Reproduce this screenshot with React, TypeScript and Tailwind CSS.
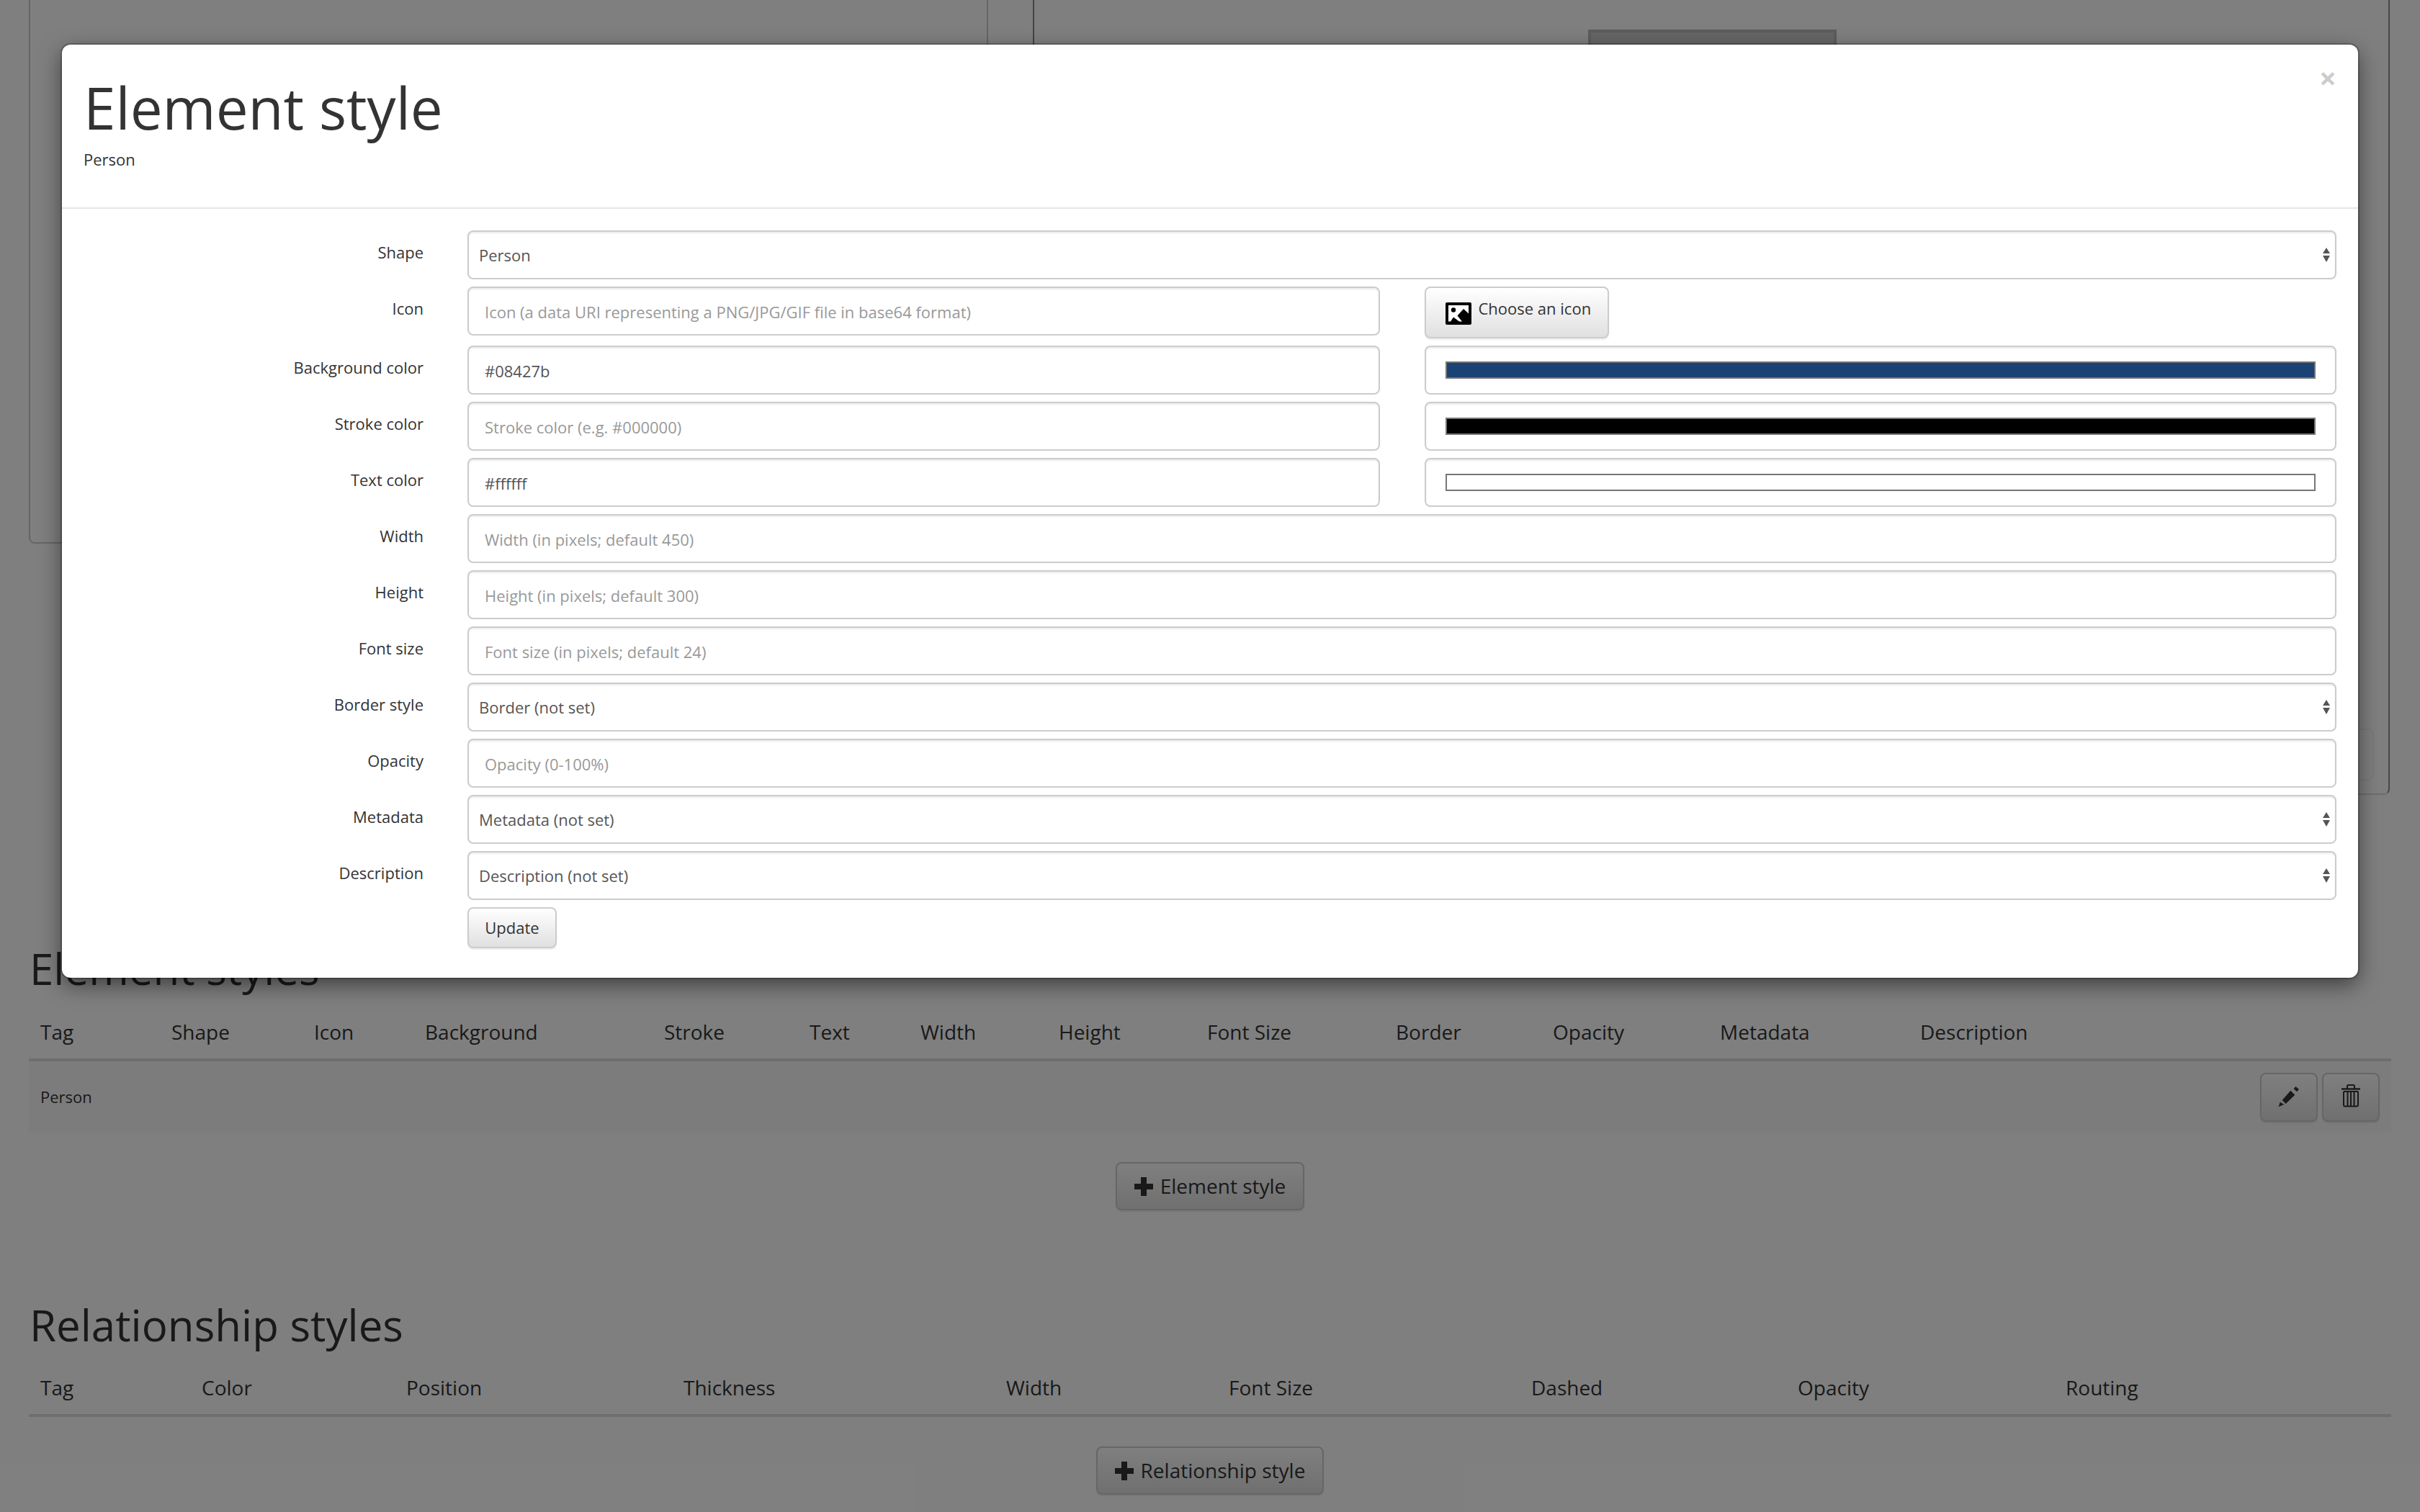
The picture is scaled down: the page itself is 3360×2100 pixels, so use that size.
import React from "react";

const BTN =
  "bg-gradient-to-b from-white to-[#e0e0e0] border-2 border-[#cccccc] rounded-lg shadow-[0_2px_2px_rgba(0,0,0,0.08)] text-[#333333]";
const FIELD =
  "w-full h-[68px] bg-white border-2 border-[#cccccc] rounded-lg shadow-[inset_0_2px_2px_rgba(0,0,0,0.075)] text-[22px] text-[#555555] outline-none";

function Plus() {
  return (
    <svg width="26" height="26" viewBox="0 0 26 26" className="shrink-0">
      <path d="M9 0H17V9H26V17H17V26H9V17H0V9H9Z" fill="#333333" />
    </svg>
  );
}

function Pencil() {
  return (
    <svg width="30" height="30" viewBox="0 0 30 30" className="-mt-[2px]">
      <path d="M0.7 29.3L2.7 22.7L8.3 26Z" fill="#333333" />
      <path d="M5.7 20L10.7 25L23.3 12.7L17.3 6.7Z" fill="#333333" />
      <path d="M21.7 4.3L24.3 1L29 5L26 8.3Z" fill="#333333" />
    </svg>
  );
}

function Trash() {
  return (
    <svg width="28" height="32" viewBox="0 0 28 32" fill="none" stroke="#333333" strokeWidth="2" className="-mt-[4px]">
      <path d="M1 6.5H27" strokeWidth="2.4" />
      <path d="M9 6V2.5C9 1.7 9.7 1 10.5 1H17.5C18.3 1 19 1.7 19 2.5V6" />
      <path d="M4 10V28.5C4 29.6 4.9 30.5 6 30.5H22C23.1 30.5 24 29.6 24 28.5V10" />
      <path d="M4 10H24M9.5 10V30M14 10V30M18.5 10V30" />
    </svg>
  );
}

function Picture() {
  return (
    <svg width="36" height="31" viewBox="0 0 36 31" className="shrink-0">
      <rect width="36" height="31" rx="2" fill="#000000" />
      <path d="M4 4H32V15.5L25 9L16.5 18.5L23 26.5H19L11 20.5L7 26.5H4Z" fill="#ffffff" />
      <circle cx="11" cy="10.5" r="3.2" fill="#000000" />
    </svg>
  );
}

function Arrows() {
  return (
    <svg
      width="10"
      height="20"
      viewBox="0 0 10 20"
      className="absolute right-[9px] top-1/2 -translate-y-1/2 pointer-events-none"
    >
      <path d="M5 0L10 8H0Z" fill="#555555" />
      <path d="M0 11H10L5 20Z" fill="#555555" />
    </svg>
  );
}

function Label({ text }: { text: string }) {
  return (
    <label className="w-[502px] shrink-0 h-[68px] pb-[8px] flex items-center justify-end text-[22px] text-[#333333]">
      {text}
    </label>
  );
}

function Row({ label, children }: { label: string; children: React.ReactNode }) {
  return (
    <div className="flex gap-[61px] mb-[10px]">
      <Label text={label} />
      <div className="flex-1 min-w-0">{children}</div>
    </div>
  );
}

function SelectRow({ label, value }: { label: string; value: string }) {
  return (
    <Row label={label}>
      <div className="relative">
        <select defaultValue={value} className={`${FIELD} appearance-none pl-[14px] pr-[30px]`}>
          <option>{value}</option>
        </select>
        <Arrows />
      </div>
    </Row>
  );
}

function TextRow({ label, placeholder }: { label: string; placeholder: string }) {
  return (
    <Row label={label}>
      <input className={`${FIELD} px-[22px] pt-[2px] placeholder:text-[#999999]`} placeholder={placeholder} />
    </Row>
  );
}

function ColorRow({
  label,
  value,
  placeholder,
  bar,
}: {
  label: string;
  value?: string;
  placeholder?: string;
  bar: string;
}) {
  return (
    <Row label={label}>
      <div className="grid grid-cols-2 gap-[62px]">
        <input
          className={`${FIELD} px-[22px] pt-[2px] placeholder:text-[#999999]`}
          defaultValue={value}
          placeholder={placeholder}
        />
        <div className={`${FIELD} px-[27px] flex items-center`}>
          <div className={`w-full h-[24px] border-2 border-[#767676] ${bar}`} />
        </div>
      </div>
    </Row>
  );
}

function TableHead({ cols, grid }: { cols: string[]; grid: string }) {
  return (
    <div className={`grid ${grid} h-[76px] border-b-4 border-[#dddddd] text-[28px] text-[#333333]`}>
      {cols.map((c) => (
        <div key={c} className="px-4 flex items-center pb-[2px]">
          {c}
        </div>
      ))}
    </div>
  );
}

function AddButton({ label, className }: { label: string; className: string }) {
  return (
    <div className={`flex justify-center ${className}`}>
      <button className={`${BTN} h-[67px] px-[24px] flex items-center gap-[10px] text-[28px]`}>
        <Plus />
        <span className="pb-[2px]">{label}</span>
      </button>
    </div>
  );
}

export default function App() {
  return (
    <div className="relative w-[3360px] h-[2100px] overflow-hidden bg-white font-['Open_Sans',sans-serif] text-[#333333]">
      <div className="px-[40px]">
        <div className="flex items-start h-[1104px]">
          <div className="w-[1332px] h-[755px] border-2 border-t-0 border-[#cccccc] rounded-b-lg" />
          <div className="relative ml-[62px] w-[1884px] h-[1104px] border-x-2 border-b-2 border-l-[#888888] border-r-[#909090] border-b-[#dddddd] rounded-b-lg">
            <div className="absolute left-[769px] top-[41px] w-[345px] h-[100px] bg-[#cccccc] border-4 border-[#bbbbbb]" />
            <div className="absolute right-[20px] top-[1012px] w-[40px] h-[72px] border-2 border-[#f2f2f2] rounded-lg" />
          </div>
        </div>

        <h2 className="mt-[208px] h-[66px] leading-[66px] pl-[1px] text-[60px] font-normal text-[#333333]">
          Element styles
        </h2>
        <div className="mt-[20px]">
          <TableHead
            grid="grid-cols-[182px_198px_154px_332px_202px_154px_192px_206px_262px_218px_232px_278px_1fr]"
            cols={[
              "Tag",
              "Shape",
              "Icon",
              "Background",
              "Stroke",
              "Text",
              "Width",
              "Height",
              "Font Size",
              "Border",
              "Opacity",
              "Metadata",
              "Description",
            ]}
          />
          <div className="h-[99px] bg-[#f9f9f9] flex items-center justify-between pl-4 pr-4 text-[22px]">
            <span>Person</span>
            <div className="flex gap-[6px]">
              <button className={`${BTN} w-[80px] h-[68px] flex items-center justify-center`}>
                <Pencil />
              </button>
              <button className={`${BTN} w-[80px] h-[68px] flex items-center justify-center`}>
                <Trash />
              </button>
            </div>
          </div>
        </div>
        <AddButton label="Element style" className="mt-[41px]" />

        <h2 className="mt-[126px] h-[66px] leading-[66px] pl-[1px] text-[60px] font-normal text-[#333333]">
          Relationship styles
        </h2>
        <div className="mt-[19px]">
          <TableHead
            grid="grid-cols-[224px_284px_385px_448px_309px_420px_370px_372px_1fr]"
            cols={[
              "Tag",
              "Color",
              "Position",
              "Thickness",
              "Width",
              "Font Size",
              "Dashed",
              "Opacity",
              "Routing",
            ]}
          />
        </div>
        <AddButton label="Relationship style" className="mt-[41px]" />
      </div>

      <div className="absolute inset-0 bg-black/50" />

      <div className="absolute left-[86px] top-[62px] w-[3188px] h-[1296px] bg-white rounded-xl shadow-[0_0_0_2px_rgba(0,0,0,0.2),0_10px_30px_rgba(0,0,0,0.5)]">
        <div className="relative h-[228px] border-b-2 border-[#e5e5e5] pl-[30px] pt-[41px]">
          <button className="absolute right-[30px] top-[16px] text-[42px] leading-[60px] font-bold text-[#cccccc]">
            ×
          </button>
          <h1 className="text-[80px] leading-[92px] font-normal text-[#333333]">Element style</h1>
          <p className="mt-[11px] text-[22px] leading-[30px] text-[#333333]">Person</p>
        </div>

        <div className="pt-[30px] pr-[30px]">
          <SelectRow label="Shape" value="Person" />
          <div className="flex gap-[61px] mb-[10px]">
            <Label text="Icon" />
            <div className="flex-1 min-w-0 grid grid-cols-2 gap-[62px] items-start h-[72px]">
              <input
                className={`${FIELD} px-[22px] pt-[2px] placeholder:text-[#999999]`}
                placeholder="Icon (a data URI representing a PNG/JPG/GIF file in base64 format)"
              />
              <div>
                <button className={`${BTN} w-[256px] h-[72px] pl-[27px] flex items-center gap-[10px] text-[22px]`}>
                  <span className="pt-[2px]">
                    <Picture />
                  </span>
                  <span className="pb-[12px]">Choose an icon</span>
                </button>
              </div>
            </div>
          </div>
          <ColorRow label="Background color" value="#08427b" bar="bg-[#1b4275]" />
          <ColorRow label="Stroke color" placeholder="Stroke color (e.g. #000000)" bar="bg-black" />
          <ColorRow label="Text color" value="#ffffff" bar="bg-white" />
          <TextRow label="Width" placeholder="Width (in pixels; default 450)" />
          <TextRow label="Height" placeholder="Height (in pixels; default 300)" />
          <TextRow label="Font size" placeholder="Font size (in pixels; default 24)" />
          <SelectRow label="Border style" value="Border (not set)" />
          <TextRow label="Opacity" placeholder="Opacity (0-100%)" />
          <SelectRow label="Metadata" value="Metadata (not set)" />
          <SelectRow label="Description" value="Description (not set)" />
          <div className="pl-[563px]">
            <button className={`${BTN} w-[124px] h-[57px] text-[22px]`}>Update</button>
          </div>
        </div>
      </div>
    </div>
  );
}
